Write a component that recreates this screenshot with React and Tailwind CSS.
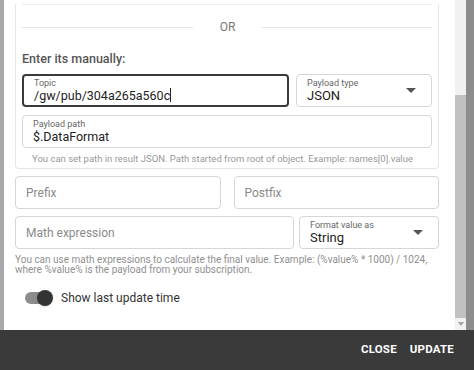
const Field = ({ label, value, focused, className = "" }) => (
  <div
    className={`h-[33px] rounded-[4px] flex flex-col justify-center px-[10px] ${
      focused ? "border-2 border-[#3a3a3a] px-[9px]" : "border border-[#d6d6d6]"
    } ${className}`}
  >
    <span className="text-[9px] leading-[10px] text-[#666]">{label}</span>
    <span className="text-[12.5px] leading-[16px] text-[#222]">{value}</span>
  </div>
);

const Select = ({ label, value, className = "" }) => (
  <div className={`h-[33px] rounded-[4px] border border-[#d6d6d6] flex items-center pl-[10px] pr-[15px] ${className}`}>
    <div className="flex flex-col flex-1">
      <span className="text-[9px] leading-[10px] text-[#666]">{label}</span>
      <span className="text-[13px] leading-[16px] text-[#222]">{value}</span>
    </div>
    <svg width="10" height="5" viewBox="0 0 10 5">
      <path d="M0 0h10L5 5z" fill="#555" />
    </svg>
  </div>
);

const Input = ({ placeholder, className = "" }) => (
  <div className={`h-[33px] rounded-[4px] border border-[#d6d6d6] flex items-center px-[10px] ${className}`}>
    <span className="text-[12px] text-[#8a8a8a]">{placeholder}</span>
  </div>
);

export default function App() {
  return (
    <div
      className="w-[474px] h-[370px] flex flex-col overflow-hidden bg-white"
      style={{ fontFamily: "Roboto, 'Liberation Sans', sans-serif" }}
    >
      <div className="flex flex-1 min-h-0">
        <div className="w-[4px] bg-[#a9a9a9]" />

        {/* scrolled content */}
        <div className="flex-1 min-w-0 pl-[11px] pr-[16px]">
          <div className="border-x border-b border-[#e6e6e6] rounded-b-[4px] px-[6px] pb-[4px]">
            <div className="h-px bg-[#eeeeee] mt-[4px]" />
            <div className="flex items-center mt-[21px] h-[2px]">
              <div className="h-px bg-[#e4e4e4] w-[171px]" />
              <span className="flex-1 text-center text-[12px] text-[#777]">OR</span>
              <div className="h-px bg-[#e4e4e4] w-[170px]" />
            </div>
            <div className="mt-[23px] text-[12.5px] leading-[16px] font-medium text-[#555]">
              Enter its manually:
            </div>
            <div className="flex gap-[7px] mt-[7px]">
              <Field
                focused
                label="Topic"
                value={
                  <>
                    /gw/pub/304a265a560c<span className="inline-block w-px h-[14px] bg-[#222] align-[-2px]" />
                  </>
                }
                className="w-[267px]"
              />
              <Select label="Payload type" value="JSON" className="flex-1" />
            </div>
            <Field label="Payload path" value="$.DataFormat" className="mt-[8px]" />
            <div className="mt-[5px] pl-[10px] text-[9.5px] leading-[11px] text-[#999]">
              You can set path in result JSON. Path started from root of object. Example: names[0].value
            </div>
          </div>

          <div className="flex gap-[13px] mt-[7px]">
            <Input placeholder="Prefix" className="flex-1" />
            <Input placeholder="Postfix" className="flex-1" />
          </div>
          <div className="flex gap-[5px] mt-[7px]">
            <Input placeholder="Math expression" className="w-[279px]" />
            <Select label="Format value as" value="String" className="flex-1" />
          </div>
          <div className="mt-[6px] text-[10px] leading-[10px] text-[#8f8f8f]">
            You can use math expressions to calculate the final value. Example: (%value% * 1000) / 1024,
            <br />
            where %value% is the payload from your subscription.
          </div>
          <div className="flex items-center mt-[14px] pl-[10px]">
            <div className="relative w-[24px] h-[12px] rounded-full bg-[#8c8c8c]">
              <div className="absolute right-[-4px] top-[-2px] w-[16px] h-[16px] rounded-full bg-[#333] shadow" />
            </div>
            <span className="ml-[12px] text-[12px] text-[#333]">Show last update time</span>
          </div>
        </div>

        {/* scrollbar */}
        <div className="w-[11px] bg-[#f1f1f1] flex flex-col">
          <div className="h-[95px]" />
          <div className="h-[223px] bg-[#c1c1c1]" />
          <div className="flex-1 flex items-center justify-center">
            <svg width="6" height="4" viewBox="0 0 6 4">
              <path d="M0 0h6L3 4z" fill="#a3a3a3" />
            </svg>
          </div>
        </div>
        <div className="w-[8px] bg-[#8d8d8d]" />
      </div>

      <div className="h-[40px] bg-[#3a3a3a] flex items-center justify-end gap-[13px] pr-[20px]">
        <span className="text-[11.5px] font-bold text-white tracking-[0.2px]">CLOSE</span>
        <span className="text-[11.5px] font-bold text-white tracking-[0.2px]">UPDATE</span>
      </div>
    </div>
  );
}
